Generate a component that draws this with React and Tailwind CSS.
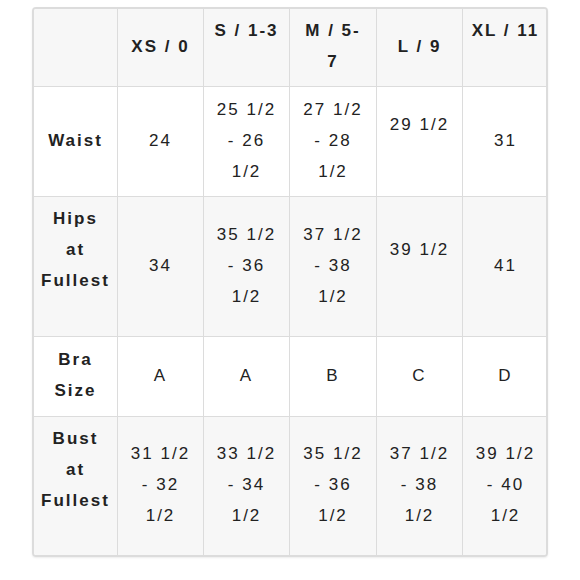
import React from "react";

const rows = [
  {
    h: "h-[78px]",
    bg: "bg-[#f7f7f7]",
    cells: [[""], ["XS / 0"], ["S / 1-3", "\u00a0"], ["M / 5-", "7"], ["L / 9"], ["XL / 11", "\u00a0"]],
  },
  {
    h: "h-[110px]",
    bg: "bg-white",
    cells: [["Waist"], ["24"], ["25 1/2", "- 26", "1/2"], ["27 1/2", "- 28", "1/2"], ["29 1/2", "\u00a0"], ["31"]],
  },
  {
    h: "h-[140px]",
    bg: "bg-[#f7f7f7]",
    cells: [["Hips", "at", "Fullest", "\u00a0"], ["34"], ["35 1/2", "- 36", "1/2"], ["37 1/2", "- 38", "1/2"], ["39 1/2", "\u00a0"], ["41"]],
  },
  {
    h: "h-[80px]",
    bg: "bg-white",
    cells: [["Bra", "Size"], ["A"], ["A"], ["B"], ["C"], ["D"]],
  },
  {
    h: "h-[138px]",
    bg: "bg-[#f7f7f7]",
    cells: [["Bust", "at", "Fullest", "\u00a0"], ["31 1/2", "- 32", "1/2"], ["33 1/2", "- 34", "1/2"], ["35 1/2", "- 36", "1/2"], ["37 1/2", "- 38", "1/2"], ["39 1/2", "- 40", "1/2"]],
  },
];

const widths = ["w-[84px]", "w-[86px]", "w-[86px]", "w-[87px]", "w-[86px]", "w-[85px]"];

export default function App() {
  return (
    <div className="w-[580px] h-[580px] bg-white pt-[7px] pl-[32px]" style={{ fontFamily: '"Liberation Sans", Arial, sans-serif' }}>
      <div className="w-[516px] border-2 border-[#dcdcdc] rounded-[4px] overflow-hidden shadow-[0_1px_2px_rgba(0,0,0,0.08)] text-[#222] text-[17px] leading-[31px] tracking-[2px]">
        {rows.map((row, ri) => (
          <div key={ri} className={`flex ${row.h} ${row.bg} ${ri < rows.length - 1 ? "border-b border-[#dcdcdc]" : ""}`}>
            {row.cells.map((lines, ci) => (
              <div
                key={ci}
                className={`${widths[ci]} shrink-0 flex flex-col items-center justify-center text-center whitespace-nowrap pb-[3px] ${ci < 5 ? "border-r border-[#dcdcdc]" : ""} ${ri === 0 || ci === 0 ? "font-bold" : ""}`}
              >
                {lines.map((l, li) => (
                  <div key={li}>{l}</div>
                ))}
              </div>
            ))}
          </div>
        ))}
      </div>
    </div>
  );
}
